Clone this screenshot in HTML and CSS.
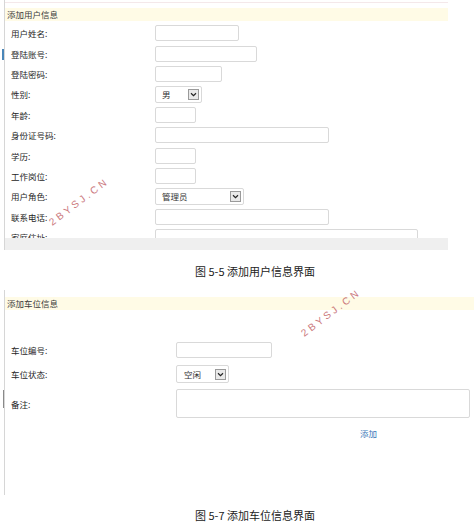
FILE: index.html
```html
<!DOCTYPE html>
<html lang="zh">
<head>
<meta charset="utf-8">
<title>添加信息界面</title>
<link rel="stylesheet" href="styles.css">
</head>
<body>
<div class="page">
  <div class="shot shot1">
    <div class="topline"></div>
    <div class="hdr">添加用户信息</div>
    <div class="form1">
      <div class="lbl">用户姓名:</div><div class="fld"><span class="inp w83"></span></div>
      <div class="lbl">登陆账号:</div><div class="fld"><span class="inp w101"></span></div>
      <div class="lbl">登陆密码:</div><div class="fld"><span class="inp w66"></span></div>
      <div class="lbl">性别:</div><div class="fld"><span class="sel w47"><span class="val">男</span><span class="arr"><svg viewBox="0 0 8 6" width="7" height="5"><path d="M1 1.5 L4 4.5 L7 1.5" fill="none" stroke="#222" stroke-width="1.4"/></svg></span></span></div>
      <div class="lbl">年龄:</div><div class="fld"><span class="inp w40"></span></div>
      <div class="lbl">身份证号码:</div><div class="fld"><span class="inp w173"></span></div>
      <div class="lbl">学历:</div><div class="fld"><span class="inp w40"></span></div>
      <div class="lbl">工作岗位:</div><div class="fld"><span class="inp w40"></span></div>
      <div class="lbl">用户角色:</div><div class="fld"><span class="sel w89"><span class="val">管理员</span><span class="arr"><svg viewBox="0 0 8 6" width="7" height="5"><path d="M1 1.5 L4 4.5 L7 1.5" fill="none" stroke="#222" stroke-width="1.4"/></svg></span></span></div>
      <div class="lbl">联系电话:</div><div class="fld"><span class="inp w173"></span></div>
      <div class="lbl">家庭住址:</div><div class="fld"><span class="inp w262"></span></div>
    </div>
    <div class="footbar"></div>
    <div class="mark mark-blue"></div>
    <div class="wm wm1">2BYSJ.CN</div>
  </div>
  <div class="caption cap1">图 5-5 添加用户信息界面</div>

  <div class="shot shot2">
    <div class="hdr hdr2">添加车位信息</div>
    <div class="form2">
      <div class="row r1"><div class="lbl2">车位编号:</div><span class="inp w95"></span></div>
      <div class="row r2"><div class="lbl2">车位状态:</div><span class="sel sel2 w53"><span class="val">空闲</span><span class="arr"><svg viewBox="0 0 8 6" width="7" height="5"><path d="M1 1.5 L4 4.5 L7 1.5" fill="none" stroke="#222" stroke-width="1.4"/></svg></span></span></div>
      <div class="row r3"><div class="lbl2">备注:</div><span class="inp area"></span></div>
      <div class="addrow"><span class="addlink">添加</span></div>
    </div>
    <div class="mark mark-gray"></div>
    <div class="wm wm2">2BYSJ.CN</div>
  </div>
  <div class="caption cap2">图 5-7 添加车位信息界面</div>
</div>
</body>
</html>
```

FILE: styles.css
```css
html, body {
  margin: 0;
  padding: 0;
  background: #ffffff;
}
body {
  font-family: "Noto Sans CJK SC", "Noto Sans", "Liberation Sans", sans-serif;
  color: #333333;
  width: 474px;
  height: 530px;
  overflow: hidden;
}
.page {
  display: flex;
  flex-direction: column;
}
.shot {
  position: relative;
  margin-left: 4px;
  border-left: 1px solid #d6d6d6;
  box-sizing: border-box;
}
.shot1 {
  width: 444px;
  height: 250px;
  padding-top: 2px;
}
.topline {
  height: 1px;
  background: #f4e8ea;
  margin-bottom: 5px;
}
.hdr {
  height: 13px;
  line-height: 13px;
  background: #fffbe6;
  font-size: 8.5px;
  color: #3a3a3a;
  padding-left: 2px;
}
.form1 {
  height: 217px;
  overflow: hidden;
  display: grid;
  grid-template-columns: 150px 1fr;
  grid-auto-rows: 20.4px;
  padding-top: 2px;
  box-sizing: border-box;
}
.lbl {
  font-size: 8.5px;
  padding-left: 6px;
  display: flex;
  align-items: center;
  color: #262626;
}
.fld {
  display: flex;
  align-items: center;
}
.inp {
  display: block;
  height: 16px;
  box-sizing: border-box;
  border: 1px solid #d9d9d9;
  border-radius: 2px;
  background: #ffffff;
}
.w40 { width: 41px; }
.w47 { width: 47px; }
.w53 { width: 53px; }
.w66 { width: 67px; }
.w83 { width: 84px; }
.w89 { width: 89px; }
.w95 { width: 96px; }
.w101 { width: 102px; }
.w173 { width: 174px; }
.w262 { width: 263px; }
.sel {
  display: flex;
  align-items: center;
  justify-content: space-between;
  height: 17px;
  box-sizing: border-box;
  border: 1px solid #d9d9d9;
  border-radius: 2px;
  background: #ffffff;
  padding: 0 2px 0 6px;
  font-size: 8.5px;
  color: #333333;
}
.arr {
  width: 11px;
  height: 11px;
  box-sizing: border-box;
  border: 1px solid #9a9a9a;
  background: #e9e9e9;
  display: flex;
  align-items: center;
  justify-content: center;
}
.footbar {
  height: 12px;
  background: #efefef;
}
.mark {
  position: absolute;
  left: -3px;
  width: 2px;
}
.mark-blue {
  top: 49px;
  height: 11px;
  background: #4a86b8;
}
.mark-gray {
  top: 100px;
  height: 18px;
  width: 1px;
  left: -2px;
  background: #8a8a8a;
}
.caption {
  text-align: center;
  font-size: 11px;
  color: #222222;
  padding-left: 36px;
}
.cap1 {
  height: 40px;
  line-height: 42px;
}
.shot2 {
  width: 470px;
  height: 205px;
  padding-top: 7px;
}
.hdr2 {
  height: 13px;
}
.form2 {
  display: flex;
  flex-direction: column;
  padding-top: 32px;
}
.row {
  display: flex;
  align-items: center;
}
.lbl2 {
  width: 171px;
  padding-left: 6px;
  box-sizing: border-box;
  font-size: 8.5px;
  color: #262626;
}
.r2 { margin-top: 7px; }
.r3 { margin-top: 6px; }
.sel2 { height: 18px; padding-left: 7px; }
.area {
  width: 294px;
  height: 29px;
}
.addrow {
  margin-top: 9px;
  padding-left: 355px;
  font-size: 8.5px;
  line-height: 12px;
}
.addlink {
  color: #3a78b8;
}
.cap2 {
  height: 40px;
  line-height: 41px;
}
.wm {
  position: absolute;
  font-family: "Liberation Sans", sans-serif;
  font-size: 10px;
  letter-spacing: 3px;
  color: #c0595f;
  transform: rotate(-37deg);
  transform-origin: center center;
  white-space: nowrap;
  opacity: 0.8;
}
.wm1 {
  left: 38px;
  top: 196px;
}
.wm2 {
  left: 290px;
  top: 17px;
}
```
